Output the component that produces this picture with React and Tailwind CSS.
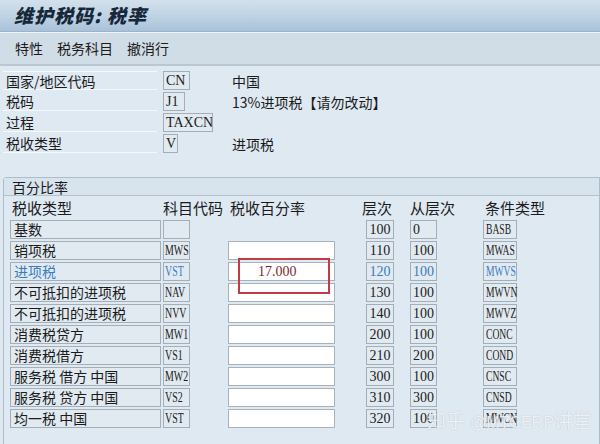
import React from "react";

const cjk = { fontFamily: '"Noto Sans CJK SC", "Noto Sans", sans-serif' };
const serif = { fontFamily: '"Liberation Serif", "Noto Sans CJK SC", serif' };

const header = [
  { label: "国家/地区代码", code: "CN", w: "w-[27px]", text: "中国" },
  { label: "税码", code: "J1", w: "w-[22px]", text: "13%进项税【请勿改动】" },
  { label: "过程", code: "TAXCN", w: "w-[50px]", text: "" },
  { label: "税收类型", code: "V", w: "w-[15px]", text: "进项税" },
];

const rows = [
  { label: "基数", code: "", pct: null, lvl: "100", from: "0", cond: "BASB" },
  { label: "销项税", code: "MWS", pct: "", lvl: "110", from: "100", cond: "MWAS" },
  { label: "进项税", code: "VST", pct: "17.000", lvl: "120", from: "100", cond: "MWVS", hl: true },
  { label: "不可抵扣的进项税", code: "NAV", pct: "", lvl: "130", from: "100", cond: "MWVN" },
  { label: "不可抵扣的进项税", code: "NVV", pct: "", lvl: "140", from: "100", cond: "MWVZ" },
  { label: "消费税贷方", code: "MW1", pct: "", lvl: "200", from: "100", cond: "CONC" },
  { label: "消费税借方", code: "VS1", pct: "", lvl: "210", from: "200", cond: "COND" },
  { label: "服务税 借方 中国", code: "MW2", pct: "", lvl: "300", from: "100", cond: "CNSC" },
  { label: "服务税 贷方 中国", code: "VS2", pct: "", lvl: "310", from: "300", cond: "CNSD" },
  { label: "均一税 中国", code: "VST", pct: "", lvl: "320", from: "100", cond: "MWCN" },
];

const box = "h-[19px] border border-[#a3aeb8] bg-[#e2eaf1] leading-[17px] text-[14px] whitespace-nowrap";

export default function App() {
  return (
    <div className="relative w-[600px] h-[444px] overflow-hidden bg-[#dfe9f2] text-[#1b1b1b]" style={cjk}>
      {/* title */}
      <div className="h-[32px] flex items-center px-[14px] border-b border-[#9fb3c6] bg-gradient-to-b from-[#d3e0ec] via-[#bfd4e3] to-[#a9c2da]">
        <span className="text-[19px] font-black italic text-[#17283a] tracking-[1px]">维护税码: 税率</span>
      </div>
      {/* toolbar */}
      <div className="h-[34px] flex items-center gap-[14px] px-[15px] bg-[#d0dce6] border-t border-[#eef3f8] border-b-2 border-b-[#b9c7d3] text-[14px]">
        <span>特性</span>
        <span>税务科目</span>
        <span>撤消行</span>
      </div>

      {/* header fields */}
      <div className="flex flex-col gap-[2px] mt-[5px] text-[14px]">
        {header.map((h, i) => (
          <div key={i} className="flex items-center h-[19px]">
            <div className={`w-[154px] ml-[3px] h-[19px] pl-[3px] leading-[19px] border-b border-[#f6f9fc] ${i === 0 ? "border-t" : ""}`}>
              {h.label}
            </div>
            <div className={`ml-[6px] ${h.w} ${box} pl-[2px] overflow-hidden`} style={serif}>{h.code}</div>
            <div className="absolute left-[232px] leading-[19px]" style={{ top: 72 + i * 21 }}>{h.text}</div>
          </div>
        ))}
      </div>

      {/* group box */}
      <div className="mt-[24px] ml-[3px] h-[270px] border border-[#aebdca] rounded-tl-[3px]">
        <div className="h-[18px] pl-[8px] text-[14px] leading-[18px] bg-[#d7e3ed] border-b border-[#b3c2ce]">百分比率</div>
        <div className="flex items-end h-[22px] text-[15px] leading-[20px]">
          <span className="ml-[8px] w-[151px]">税收类型</span>
          <span className="w-[67px]">科目代码</span>
          <span className="w-[132px]">税收百分率</span>
          <span className="w-[48px]">层次</span>
          <span className="w-[75px]">从层次</span>
          <span>条件类型</span>
        </div>
        <div className="flex flex-col gap-[2px] mt-[2px]">
          {rows.map((r, i) => {
            const c = r.hl ? "text-[#3a7bbf]" : "";
            return (
              <div key={i} className={`flex items-center ${c}`}>
                <div className={`ml-[6px] w-[151px] ${box} pl-[3px] overflow-hidden`}>{r.label}</div>
                <div className={`ml-[2px] w-[27px] ${box} pl-[1px] text-[15px]`} style={serif}>
                  <span className="inline-block origin-left [transform:scaleX(0.66)]">{r.code}</span>
                </div>
                {r.pct === null ? (
                  <div className="ml-[38px] w-[107px] h-[19px]" />
                ) : (
                  <div className="ml-[38px] w-[107px] h-[19px] bg-white border border-[#a8b2bb] text-[14px] leading-[17px] pl-[29px] text-[#7a2a2a]" style={serif}>
                    {r.pct}
                  </div>
                )}
                <div className={`ml-[31px] w-[28px] ${box} text-center`} style={serif}>{r.lvl}</div>
                <div className={`ml-[16px] w-[27px] ${box} pl-[2px]`} style={serif}>{r.from}</div>
                <div className={`ml-[46px] w-[34px] ${box} pl-[2px] text-[15px]`} style={serif}>
                  <span className="inline-block origin-left [transform:scaleX(0.64)]">{r.cond}</span>
                </div>
              </div>
            );
          })}
        </div>
      </div>

      {/* red highlight */}
      <div className="absolute left-[238px] top-[258px] w-[92px] h-[36px] border-2 border-[#c23a44]" />

      {/* watermark */}
      <div className="absolute left-[427px] top-[408px] flex items-baseline text-white/80 whitespace-nowrap [text-shadow:0_0_1px_rgba(120,140,160,0.6)]" style={{ fontFamily: '"Liberation Sans", "Noto Sans CJK SC", sans-serif' }}>
        <span className="text-[19px]">知乎</span>
        <span className="text-[16px] ml-[5px]">@MTCERP</span>
        <span className="text-[19px]">讲堂</span>
      </div>
    </div>
  );
}
